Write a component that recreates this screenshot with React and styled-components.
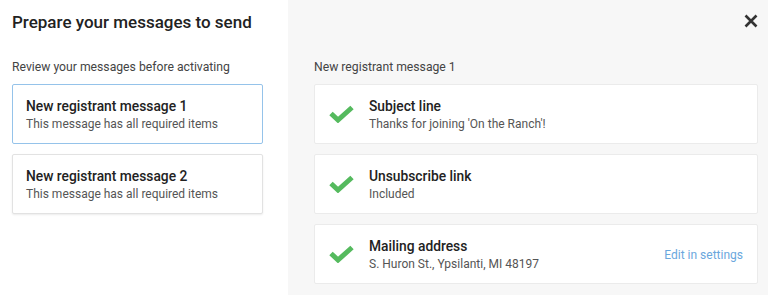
import styled, { createGlobalStyle } from "styled-components"

const GlobalStyle = createGlobalStyle`
    html, body {
        margin : 0;
        padding : 0;
    }
    body {
        font-family : Roboto, "Open Sans", sans-serif;
        color : #222;
    }
`;

const Page = styled.div`
    display : flex;
    width : 100vw;
    height : 100vh;
    overflow : hidden;
`;

const Left = styled.div`
    width : 288px;
    padding : 11px 25px 0 12px;
    box-sizing : border-box;
    background : #fff;
`;

const Right = styled.div`
    flex : 1;
    padding : 10px 10px 0 26px;
    background : #f7f7f7;
`;

const Title = styled.h1`
    margin : 0;
    font-size : 17px;
    line-height : 22px;
    font-weight : 500;
    color : #222;
`;

const Label = styled.div`
    margin-top : ${p => (p.$right ? "26px" : "25px")};
    font-size : 12.2px;
    line-height : 18px;
    color : #444;
`;

const List = styled.div`
    display : flex;
    flex-direction : column;
    gap : 10px;
    margin-top : 8px;
`;

const MessageCard = styled.div`
    height : 60px;
    box-sizing : border-box;
    padding : 2px 13px 0;
    display : flex;
    flex-direction : column;
    justify-content : center;
    border : 1px solid ${p => (p.$active ? "#95c3ea" : "#e2e2e2")};
    border-radius : 2px;
    background : #fff;
    box-shadow : ${p => (p.$active ? "none" : "0 1px 2px rgba(0,0,0,0.08)")};
`;

const CardTitle = styled.div`
    font-size : 13.8px;
    line-height : 18px;
    font-weight : 500;
    color : #222;
`;

const CardText = styled.div`
    font-size : 12px;
    line-height : 18px;
    color : #555;
`;

const CloseRow = styled.div`
    display : flex;
    justify-content : flex-end;
    height : 22px;
    align-items : center;
`;

const CloseButton = styled.button`
    border : none;
    background : none;
    padding : 0;
    width : 14px;
    height : 14px;
    cursor : pointer;
    display : flex;
`;

const CheckCard = styled.div`
    height : 60px;
    box-sizing : border-box;
    padding : 0 14px;
    display : flex;
    align-items : center;
    gap : 15px;
    border : 1px solid #ebebeb;
    border-radius : 2px;
    background : #fff;
`;

const CheckBody = styled.div`
    flex : 1;
    padding-top : 2px;
`;

const EditLink = styled.a`
    font-size : 12px;
    color : #6aa7dd;
    cursor : pointer;
    padding-top : 2px;
`;

const Check = () => (
    <svg width="25" height="18" viewBox="0 0 25 18">
        <polyline points="2,8.5 9,15 23,2.5" fill="none" stroke="#55ba5e" strokeWidth="5" strokeLinejoin="miter" />
    </svg>
);

const CloseIcon = () => (
    <svg width="14" height="14" viewBox="0 0 14 14">
        <path d="M1.5 1.5 L12.5 12.5 M12.5 1.5 L1.5 12.5" stroke="#333" strokeWidth="2.6" />
    </svg>
);

const messages = [
    { title: "New registrant message 1", text: "This message has all required items", active: true },
    { title: "New registrant message 2", text: "This message has all required items" },
];

const checks = [
    { title: "Subject line", text: "Thanks for joining 'On the Ranch'!" },
    { title: "Unsubscribe link", text: "Included" },
    { title: "Mailing address", text: "S. Huron St., Ypsilanti, MI 48197", link: "Edit in settings" },
];

const App = () => {
  return (
    <Page>
        <GlobalStyle />
        <Left>
            <Title>Prepare your messages to send</Title>
            <Label>Review your messages before activating</Label>
            <List>
                {messages.map(m => (
                    <MessageCard key={m.title} $active={m.active}>
                        <CardTitle>{m.title}</CardTitle>
                        <CardText>{m.text}</CardText>
                    </MessageCard>
                ))}
            </List>
        </Left>
        <Right>
            <CloseRow>
                <CloseButton aria-label="Close"><CloseIcon /></CloseButton>
            </CloseRow>
            <Label $right>New registrant message 1</Label>
            <List>
                {checks.map(c => (
                    <CheckCard key={c.title}>
                        <Check />
                        <CheckBody>
                            <CardTitle>{c.title}</CardTitle>
                            <CardText>{c.text}</CardText>
                        </CheckBody>
                        {c.link && <EditLink>{c.link}</EditLink>}
                    </CheckCard>
                ))}
            </List>
        </Right>
    </Page>
  )
}

export default App
